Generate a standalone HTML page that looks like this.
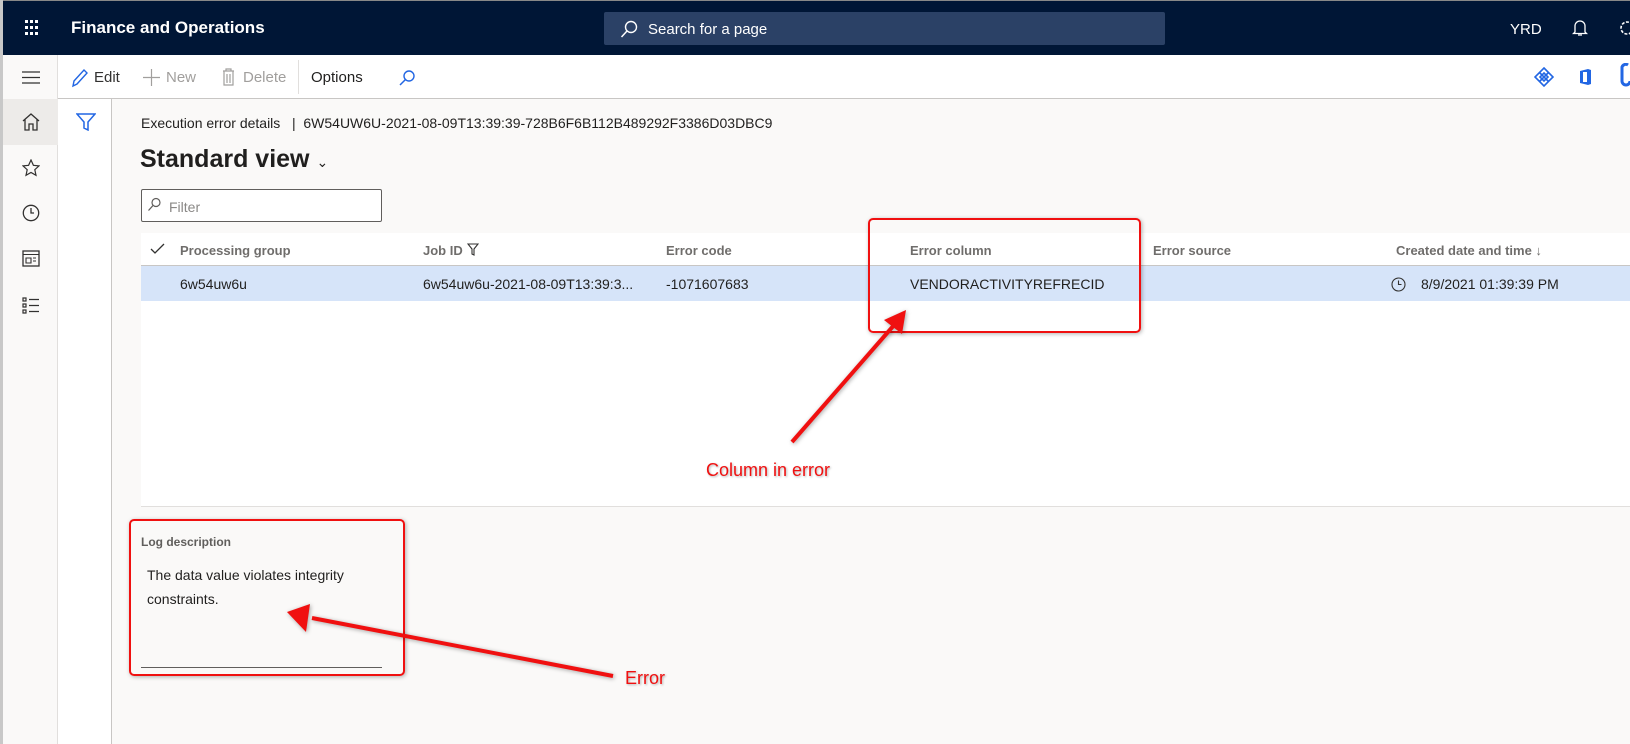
<!DOCTYPE html>
<html><head><meta charset="utf-8"><style>
*{margin:0;padding:0;box-sizing:border-box}
body{width:1630px;height:744px;overflow:hidden;background:#faf9f8;font-family:"Liberation Sans",sans-serif;position:relative;color:#323130}
.a{position:absolute}
.top{left:0;top:0;width:1630px;height:55px;background:#001636;border-top:1px solid #888}
.t{white-space:nowrap}
</style></head><body>
<div class="a top"></div>
<div class="a" style="left:0;top:0;width:3px;height:744px;background:#c8c8c8"></div>
<svg class="a" style="left:25px;top:20px" width="14" height="17"><g fill="#fff">
<rect x="0" y="0" width="3" height="3"/><rect x="5" y="0" width="3" height="3"/><rect x="10" y="0" width="3" height="3"/>
<rect x="0" y="6" width="3" height="3"/><rect x="5" y="6" width="3" height="3"/><rect x="10" y="6" width="3" height="3"/>
<rect x="0" y="12" width="3" height="3"/><rect x="5" y="12" width="3" height="3"/><rect x="10" y="12" width="3" height="3"/></g></svg>
<div class="a t" style="left:71px;top:18px;color:#fff;font-size:17px;font-weight:bold">Finance and Operations</div>
<div class="a" style="left:604px;top:12px;width:561px;height:33px;background:#2b4166;border-radius:2px"></div>
<svg class="a" style="left:620px;top:20px" width="18" height="18"><circle cx="11" cy="7" r="5.5" fill="none" stroke="#fff" stroke-width="1.4"/><line x1="7" y1="11" x2="1.5" y2="17" stroke="#fff" stroke-width="1.5"/></svg>
<div class="a t" style="left:648px;top:21px;color:#fff;font-size:15px">Search for a page</div>
<div class="a t" style="left:1510px;top:21px;color:#fff;font-size:15px">YRD</div>
<svg class="a" style="left:1572px;top:19px" width="16" height="18"><path d="M3 13V7a5 5 0 0 1 10 0v6l1.5 1.5h-13z M6 16h4" fill="none" stroke="#fff" stroke-width="1.3"/></svg>
<svg class="a" style="left:1618px;top:19px" width="12" height="18"><circle cx="9" cy="9" r="6" fill="none" stroke="#fff" stroke-width="1.6" stroke-dasharray="3 1.5"/></svg>
<div class="a" style="left:3px;top:55px;width:1627px;height:44px;background:#fff;border-bottom:1px solid #c8c6c4"></div>
<div class="a" style="left:3px;top:55px;width:55px;height:689px;background:#faf9f8;border-right:1px solid #e1dfdd"></div>
<div class="a" style="left:3px;top:99px;width:55px;height:46px;background:#edebe9"></div>
<svg class="a" style="left:22px;top:71px" width="18" height="14"><path d="M0 1h18M0 6.5h18M0 12h18" stroke="#323130" stroke-width="1.2"/></svg>
<svg class="a" style="left:71px;top:68px" width="18" height="20"><path d="M2 18l1-5L13 2l3 3L6 16z" fill="none" stroke="#2266e3" stroke-width="1.4"/></svg>
<div class="a t" style="left:94px;top:69px;font-size:15px">Edit</div>
<svg class="a" style="left:143px;top:69px" width="17" height="17"><path d="M8.5 0v17M0 8.5h17" stroke="#a19f9d" stroke-width="1.2"/></svg>
<div class="a t" style="left:166px;top:69px;font-size:15px;color:#a19f9d">New</div>
<svg class="a" style="left:222px;top:68px" width="13" height="18"><path d="M1 3h11M4 3V1h5v2M2 3v14h9V3M5 6v9M8 6v9" fill="none" stroke="#a19f9d" stroke-width="1.2"/></svg>
<div class="a t" style="left:243px;top:69px;font-size:15px;color:#a19f9d">Delete</div>
<div class="a" style="left:298px;top:60px;width:1px;height:34px;background:#e1dfdd"></div>
<div class="a t" style="left:311px;top:69px;font-size:15px;color:#201f1e">Options</div>
<svg class="a" style="left:398px;top:69px" width="18" height="18"><circle cx="11" cy="7" r="5" fill="none" stroke="#2266e3" stroke-width="1.4"/><line x1="7.5" y1="10.5" x2="2" y2="16" stroke="#2266e3" stroke-width="1.5"/></svg>
<svg class="a" style="left:1534px;top:67px" width="20" height="20"><path d="M10 1l9 9-9 9-9-9z M10 6l4 4-4 4-4-4z M5.5 5.5l9 9 M14.5 5.5l-9 9" fill="none" stroke="#2266e3" stroke-width="1.6"/></svg>
<svg class="a" style="left:1578px;top:68px" width="14" height="18"><path d="M2 3l8-2 3 1v14l-3 1-8-2z" fill="#2266e3"/><rect x="5" y="4" width="4" height="10" fill="#fff"/></svg>
<svg class="a" style="left:1620px;top:63px" width="10" height="24"><path d="M8 2a4 4 0 0 0-6 2v14a4 4 0 0 0 8 0" fill="none" stroke="#2266e3" stroke-width="3"/></svg>
<svg class="a" style="left:22px;top:113px" width="18" height="18"><path d="M1 8L9 1l8 7M3 6v11h4v-6h4v6h4V6" fill="none" stroke="#323130" stroke-width="1.3"/></svg>
<svg class="a" style="left:22px;top:159px" width="18" height="18"><path d="M9 1l2.4 5.3 5.6.6-4.2 3.8 1.2 5.6L9 13.5l-5 2.8 1.2-5.6L1 6.9l5.6-.6z" fill="none" stroke="#323130" stroke-width="1.2"/></svg>
<svg class="a" style="left:22px;top:204px" width="18" height="18"><circle cx="9" cy="9" r="7.7" fill="none" stroke="#323130" stroke-width="1.3"/><path d="M9 4v5h3" fill="none" stroke="#323130" stroke-width="1.3"/></svg>
<svg class="a" style="left:22px;top:250px" width="18" height="17"><rect x="1" y="1" width="16" height="15" fill="none" stroke="#323130" stroke-width="1.3"/><path d="M1 4.5h16M4 8h5v5H4zM11 8h3M11 11h3" fill="none" stroke="#323130" stroke-width="1.1"/></svg>
<svg class="a" style="left:22px;top:297px" width="18" height="18"><path d="M1 1h3v3H1zM1 7h3v3H1zM1 13h3v3H1zM7 2.5h10M7 8.5h10M7 14.5h10" fill="none" stroke="#323130" stroke-width="1.2"/></svg>
<div class="a" style="left:58px;top:99px;width:54px;height:645px;background:#fff;border-right:1px solid #c8c6c4"></div>
<svg class="a" style="left:76px;top:113px" width="20" height="18"><path d="M1 1h18l-7 8v8l-4-2V9z" fill="none" stroke="#2266e3" stroke-width="1.5"/></svg>
<div class="a t" style="left:141px;top:115px;font-size:14px;color:#201f1e">Execution error details &nbsp;&nbsp;| &nbsp;6W54UW6U-2021-08-09T13:39:39-728B6F6B112B489292F3386D03DBC9</div>
<div class="a t" style="left:140px;top:145px;font-size:25px;font-weight:bold;color:#201f1e">Standard view <span style="font-size:14px;font-weight:normal">&#8964;</span></div>
<div class="a" style="left:141px;top:189px;width:241px;height:33px;background:#fff;border:1px solid #605e5c;border-radius:2px"></div>
<svg class="a" style="left:147px;top:197px" width="14" height="15"><circle cx="9" cy="5.5" r="4" fill="none" stroke="#605e5c" stroke-width="1.2"/><line x1="6" y1="8.5" x2="1.5" y2="13.5" stroke="#605e5c" stroke-width="1.3"/></svg>
<div class="a t" style="left:169px;top:199px;font-size:14px;color:#8a8886">Filter</div>
<div class="a" style="left:141px;top:233px;width:1489px;height:274px;background:#fff;border-bottom:1px solid #e1dfdd"></div>
<div class="a" style="left:141px;top:265px;width:1489px;height:1px;background:#c8c6c4"></div>
<div class="a" style="left:141px;top:266px;width:1489px;height:35px;background:#d6e4f9"></div>
<svg class="a" style="left:150px;top:243px" width="15" height="12"><path d="M1 6l4 4 9-9" fill="none" stroke="#323130" stroke-width="1.3"/></svg>
<div class="a t" style="left:180px;top:243px;font-size:13px;color:#605e5c;font-weight:bold;opacity:.9">Processing group</div>
<div class="a t" style="left:423px;top:243px;font-size:13px;color:#605e5c;font-weight:bold;opacity:.9">Job ID</div>
<svg class="a" style="left:467px;top:243px" width="12" height="13"><path d="M1 1h10l-4 5v6l-2-1V6z" fill="none" stroke="#323130" stroke-width="1.1"/></svg>
<div class="a t" style="left:666px;top:243px;font-size:13px;color:#605e5c;font-weight:bold;opacity:.9">Error code</div>
<div class="a t" style="left:910px;top:243px;font-size:13px;color:#605e5c;font-weight:bold;opacity:.9">Error column</div>
<div class="a t" style="left:1153px;top:243px;font-size:13px;color:#605e5c;font-weight:bold;opacity:.9">Error source</div>
<div class="a t" style="left:1396px;top:243px;font-size:13px;color:#605e5c;font-weight:bold;opacity:.9">Created date and time &#8595;</div>
<div class="a t" style="left:180px;top:276px;font-size:14px;color:#201f1e">6w54uw6u</div>
<div class="a t" style="left:423px;top:276px;font-size:14px;color:#201f1e">6w54uw6u-2021-08-09T13:39:3...</div>
<div class="a t" style="left:666px;top:276px;font-size:14px;color:#201f1e">-1071607683</div>
<div class="a t" style="left:910px;top:276px;font-size:14px;color:#201f1e">VENDORACTIVITYREFRECID</div>
<svg class="a" style="left:1391px;top:277px" width="15" height="15"><circle cx="7.5" cy="7.5" r="6.5" fill="none" stroke="#323130" stroke-width="1.1"/><path d="M7.5 3.5v4h3" fill="none" stroke="#323130" stroke-width="1.1"/></svg>
<div class="a t" style="left:1421px;top:276px;font-size:14px;color:#201f1e">8/9/2021 01:39:39 PM</div>
<div class="a t" style="left:141px;top:535px;font-size:12px;color:#605e5c;font-weight:bold">Log description</div>
<div class="a" style="left:147px;top:563px;font-size:14px;color:#201f1e;line-height:24px">The data value violates integrity<br>constraints.</div>
<div class="a" style="left:141px;top:667px;width:241px;height:1px;background:#605e5c"></div>
<div class="a" style="left:868px;top:218px;width:273px;height:115px;border:2px solid #f01010;border-radius:5px;box-shadow:1px 1px 4px rgba(0,0,0,.3)"></div>
<div class="a" style="left:129px;top:519px;width:276px;height:157px;border:2px solid #f01010;border-radius:5px;box-shadow:1px 1px 4px rgba(0,0,0,.3)"></div>
<svg class="a" style="left:0;top:0;filter:drop-shadow(1px 1px 2px rgba(0,0,0,.35))" width="1630" height="744">
<line x1="792" y1="442" x2="895" y2="324" stroke="#f01010" stroke-width="4"/>
<path d="M906 310L902 334L884 320z" fill="#f01010"/>
<line x1="613" y1="676" x2="312" y2="618" stroke="#f01010" stroke-width="4"/>
<path d="M287 612L310 604L306 632z" fill="#f01010"/>
</svg>
<div class="a t" style="left:706px;top:460px;font-size:18px;color:#f01010;text-shadow:1px 1px 2px rgba(0,0,0,.3)">Column in error</div>
<div class="a t" style="left:625px;top:668px;font-size:18px;color:#f01010;text-shadow:1px 1px 2px rgba(0,0,0,.3)">Error</div>
</body></html>
